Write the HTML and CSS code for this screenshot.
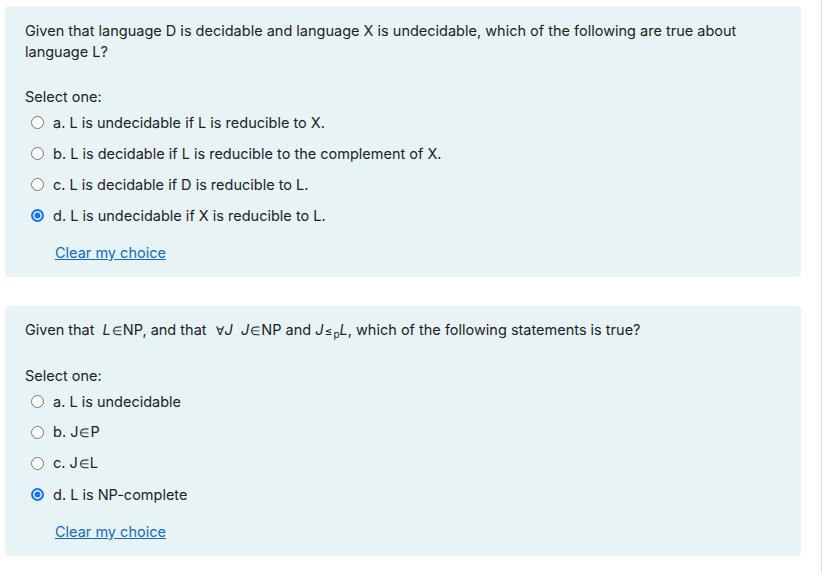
FILE: index.html
```html
<!DOCTYPE html>
<html lang="en">
<head>
    <meta charset="UTF-8">
    <meta name="viewport" content="width=device-width, initial-scale=1.0">
    <title>Quiz</title>
    <link rel="stylesheet" href="styles.css">
</head>
<body>
    <div class="page">
        <div class="region-main">
            <div class="que">
                <div class="qtext">Given that language D is decidable and language X is undecidable, which of the following are true about language L?</div>
                <div class="prompt">Select one:</div>
                <div class="answer">
                    <div class="option"><span class="radio"></span><span class="label">a. L is undecidable if L is reducible to X.</span></div>
                    <div class="option"><span class="radio"></span><span class="label">b. L is decidable if L is reducible to the complement of X.</span></div>
                    <div class="option"><span class="radio"></span><span class="label">c. L is decidable if D is reducible to L.</span></div>
                    <div class="option"><span class="radio checked"></span><span class="label">d. L is undecidable if X is reducible to L.</span></div>
                </div>
                <a class="clear" href="#">Clear my choice</a>
            </div>

            <div class="que">
                <div class="qtext">Given that <span class="math"><i>L</i><span class="op">∈</span>NP</span>, and that <span class="math"><span class="op">∀</span><i>J</i></span> <span class="math"><i>J</i><span class="op">∈</span>NP</span> and <i>J</i><span class="op">≤</span><sub>p</sub><i>L</i>, which of the following statements is true?</div>
                <div class="prompt">Select one:</div>
                <div class="answer">
                    <div class="option"><span class="radio"></span><span class="label">a. L is undecidable</span></div>
                    <div class="option"><span class="radio"></span><span class="label">b. J<span class="op">∈</span>P</span></div>
                    <div class="option"><span class="radio"></span><span class="label">c. J<span class="op">∈</span>L</span></div>
                    <div class="option"><span class="radio checked"></span><span class="label">d. L is NP-complete</span></div>
                </div>
                <a class="clear" href="#">Clear my choice</a>
            </div>
        </div>
    </div>
</body>
</html>
```

FILE: styles.css
```css
* {
    margin: 0;
    padding: 0;
    box-sizing: border-box;
}

body {
    font-family: Inter, "Noto Sans", sans-serif;
    font-size: 14.5px;
    line-height: 21.6px;
    color: #1d2125;
    background: #fff;
}

.page {
    display: flex;
    min-height: 100vh;
}

.region-main {
    width: 822px;
    padding: 6px 20px 0 5px;
    border-right: 1px solid #dcdcdc;
}

.que {
    background: #e7f3f5;
    border-radius: 4px;
    padding: 13.6px 20px 13.2px;
    margin-bottom: 29px;
}

.qtext {
    margin-bottom: 22.8px;
}

.math {
    margin-left: 4px;
}

.qtext i {
    font-style: italic;
}

.op {
    font-size: 12px;
    margin: 0 1px;
}

sub {
    font-size: 10px;
    line-height: 0;
    vertical-align: -3px;
}

.option {
    display: flex;
    align-items: center;
    height: 31px;
    padding-left: 6px;
}

.radio {
    width: 13px;
    height: 13px;
    border-radius: 50%;
    border: 1px solid #767676;
    background: #fff;
    margin-right: 9px;
    flex-shrink: 0;
}

.radio.checked {
    border: 2px solid #1a74f0;
    box-shadow: inset 0 0 0 1.5px #fff;
    background: #1a74f0;
}

.clear {
    display: inline-block;
    margin-top: 10.7px;
    margin-left: 30px;
    color: #0f6cbf;
    text-decoration: underline;
}
```
